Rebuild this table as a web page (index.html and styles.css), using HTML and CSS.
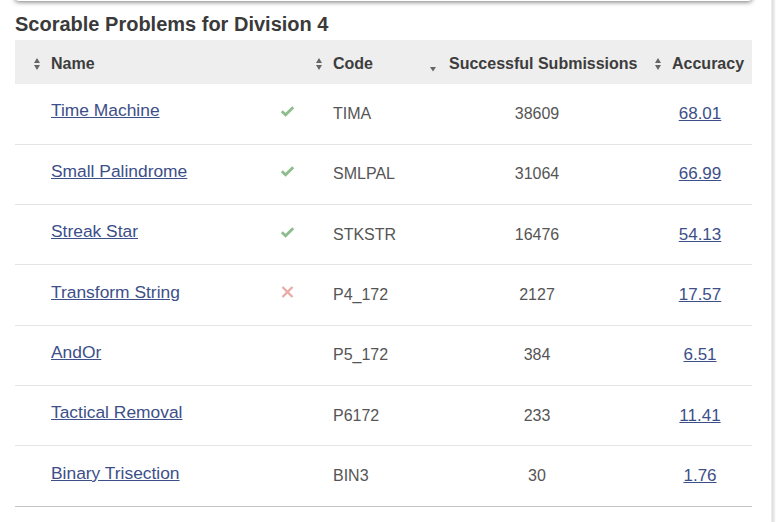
FILE: index.html
```html
<!DOCTYPE html>
<html>
<head>
<meta charset="utf-8">
<link rel="stylesheet" href="styles.css">
</head>
<body>
<div class="page">
  <div class="prev-card"></div>
  <h2 class="title">Scorable Problems for Division 4</h2>
  <table class="problems">
    <colgroup>
      <col class="c-name"><col class="c-code"><col class="c-subs"><col class="c-acc">
    </colgroup>
    <thead>
      <tr>
        <th class="th-name"><span class="sort"><svg width="6" height="12" viewBox="0 0 6 12"><path d="M3 0L6 5H0Z M0 7H6L3 12Z" fill="#666"/></svg></span>Name</th>
        <th class="th-code"><span class="sort"><svg width="6" height="12" viewBox="0 0 6 12"><path d="M3 0L6 5H0Z M0 7H6L3 12Z" fill="#666"/></svg></span>Code</th>
        <th class="th-subs"><span class="sort down"><svg width="6" height="5" viewBox="0 0 6 5"><path d="M0 0H6L3 4.5Z" fill="#666"/></svg></span>Successful Submissions</th>
        <th class="th-acc"><span class="sort"><svg width="6" height="12" viewBox="0 0 6 12"><path d="M3 0L6 5H0Z M0 7H6L3 12Z" fill="#666"/></svg></span>Accuracy</th>
      </tr>
    </thead>
    <tbody>
      <tr>
        <td class="td-name"><div class="name-wrap"><a href="#">Time Machine</a><span class="status"><svg width="15" height="12" viewBox="0 0 15 12"><path d="M1.8 6.2L5.6 9.8L13.2 2.2" fill="none" stroke="#8dbc8d" stroke-width="2.8"/></svg></span></div></td>
        <td class="td-code">TIMA</td><td class="td-subs">38609</td><td class="td-acc"><a href="#">68.01</a></td>
      </tr>
      <tr>
        <td class="td-name"><div class="name-wrap"><a href="#">Small Palindrome</a><span class="status"><svg width="15" height="12" viewBox="0 0 15 12"><path d="M1.8 6.2L5.6 9.8L13.2 2.2" fill="none" stroke="#8dbc8d" stroke-width="2.8"/></svg></span></div></td>
        <td class="td-code">SMLPAL</td><td class="td-subs">31064</td><td class="td-acc"><a href="#">66.99</a></td>
      </tr>
      <tr>
        <td class="td-name"><div class="name-wrap"><a href="#">Streak Star</a><span class="status"><svg width="15" height="12" viewBox="0 0 15 12"><path d="M1.8 6.2L5.6 9.8L13.2 2.2" fill="none" stroke="#8dbc8d" stroke-width="2.8"/></svg></span></div></td>
        <td class="td-code">STKSTR</td><td class="td-subs">16476</td><td class="td-acc"><a href="#">54.13</a></td>
      </tr>
      <tr>
        <td class="td-name"><div class="name-wrap"><a href="#">Transform String</a><span class="status"><svg width="15" height="12" viewBox="0 0 15 12"><path d="M2.5 1L12.5 11M12.5 1L2.5 11" fill="none" stroke="#eaaba6" stroke-width="2.4"/></svg></span></div></td>
        <td class="td-code">P4_172</td><td class="td-subs">2127</td><td class="td-acc"><a href="#">17.57</a></td>
      </tr>
      <tr>
        <td class="td-name"><div class="name-wrap"><a href="#">AndOr</a><span class="status"></span></div></td>
        <td class="td-code">P5_172</td><td class="td-subs">384</td><td class="td-acc"><a href="#">6.51</a></td>
      </tr>
      <tr>
        <td class="td-name"><div class="name-wrap"><a href="#">Tactical Removal</a><span class="status"></span></div></td>
        <td class="td-code">P6172</td><td class="td-subs">233</td><td class="td-acc"><a href="#">11.41</a></td>
      </tr>
      <tr class="last">
        <td class="td-name"><div class="name-wrap"><a href="#">Binary Trisection</a><span class="status"></span></div></td>
        <td class="td-code">BIN3</td><td class="td-subs">30</td><td class="td-acc"><a href="#">1.76</a></td>
      </tr>
    </tbody>
  </table>
</div>
<div class="edge"></div>
</body>
</html>
```
FILE: styles.css
```css
html, body {
  margin: 0;
  padding: 0;
  background: #fff;
  font-family: "Liberation Sans", Arial, sans-serif;
  overflow: hidden;
}
.page {
  width: 737px;
  margin-left: 15px;
}
.prev-card {
  height: 12px;
  margin-top: -11px;
  background: #fff;
  border-radius: 4px;
  box-shadow: 0 1px 5px rgba(0, 0, 0, 0.55);
}
.title {
  margin: 12px 0 4px 0;
  font-size: 20px;
  line-height: 23px;
  font-weight: bold;
  color: #3a3a3a;
}
.problems {
  width: 737px;
  border-collapse: collapse;
  table-layout: fixed;
}
.c-name { width: 285px; }
.c-code { width: 120px; }
.c-subs { width: 230px; }
.c-acc { width: 102px; }
.problems thead th {
  background: #eeeeee;
  height: 44px;
  padding: 3px 0 0 0;
  box-sizing: border-box;
  text-align: left;
  font-size: 16px;
  font-weight: bold;
  color: #3d3d3d;
  white-space: nowrap;
}
.sort {
  display: inline-block;
  width: 6px;
  margin-right: 11px;
  vertical-align: -1px;
}
.sort svg { display: block; }
.sort.down { vertical-align: -3px; margin-right: 13px; }
.th-name { padding-left: 19px !important; }
.th-code { padding-left: 16px !important; }
.th-subs { padding-left: 10px !important; }
.th-acc { padding-left: 5px !important; }
.problems tbody td {
  height: 60.33px;
  box-sizing: border-box;
  border-bottom: 1px solid #e4e4e4;
  font-size: 16px;
  color: #555;
  padding: 0;
  vertical-align: middle;
}
.problems tbody tr.last td {
  border-bottom-color: #c4c4c4;
}
.td-name { padding: 0 5px 6px 36px !important; }
.name-wrap {
  display: flex;
  align-items: center;
}
.name-wrap a {
  flex: 1;
  font-size: 17.4px;
  color: #3d4f88;
  text-decoration: underline;
}
.status {
  width: 15px;
  height: 12px;
}
.status svg { display: block; }
.td-code { padding-left: 33px !important; }
.td-subs { text-align: center; padding-left: 4px !important; }
.td-acc { text-align: center; padding-right: 2px !important; }
.td-acc a {
  font-size: 17px;
  color: #3d4f88;
  text-decoration: underline;
}
.edge {
  position: fixed;
  top: 0;
  left: 771px;
  width: 6px;
  height: 100%;
  background: linear-gradient(to right, #fff 0, #dcdcdc 1px, #e8e8e8 3px, #f6f6f6 4px, #fff 5px);
}
```
